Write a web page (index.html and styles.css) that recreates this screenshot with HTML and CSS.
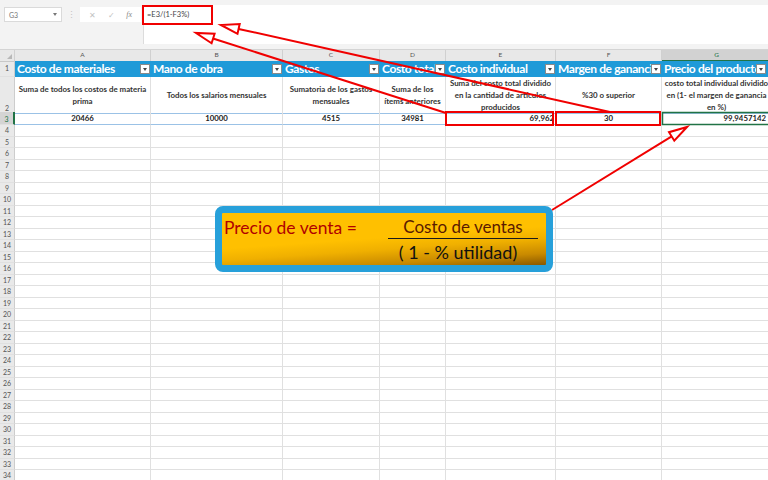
FILE: index.html
```html
<!DOCTYPE html>
<html lang="es">
<head>
    <meta charset="UTF-8">
    <meta name="viewport" content="width=device-width, initial-scale=1.0">
    <title>Precio de venta</title>
    <link rel="stylesheet" href="styles.css">
</head>
<body>
    <div class="formula-bar">
        <div class="namebox"><span>G3</span><span class="caret"></span></div>
        <div class="dots">⋮</div>
        <div class="fx-tools"><span>✕</span><span>✓</span><span class="fx">fx</span></div>
        <div class="formula">=E3/(1-F3%)</div>
    </div>

    <div class="sheet">
        <div class="row col-head">
            <div class="corner"></div>
            <div>A</div><div>B</div><div>C</div><div>D</div><div>E</div><div>F</div>
            <div class="active">G</div>
        </div>

        <div class="row row1">
            <div class="num">1</div>
            <div class="head">Costo de materiales<span class="filter"></span></div>
            <div class="head">Mano de obra<span class="filter"></span></div>
            <div class="head">Gastos<span class="filter"></span></div>
            <div class="head">Costo total<span class="filter"></span></div>
            <div class="head">Costo individual<span class="filter"></span></div>
            <div class="head">Margen de ganancia<span class="filter"></span></div>
            <div class="head">Precio del producto<span class="filter last"></span></div>
        </div>

        <div class="row row2">
            <div class="num">2</div>
            <div class="desc">Suma de todos los costos de materia prima</div>
            <div class="desc">Todos los salarios mensuales</div>
            <div class="desc">Sumatoria de los gastos mensuales</div>
            <div class="desc">Suma de los<br>ítems anteriores</div>
            <div class="desc">Suma del costo total dividido en la cantidad de artículos producidos</div>
            <div class="desc">%30 o superior</div>
            <div class="desc">costo total individual dividido en (1- el margen de ganancia en %)</div>
        </div>

        <div class="row row3">
            <div class="num">3</div>
            <div class="val">20466</div>
            <div class="val">10000</div>
            <div class="val">4515</div>
            <div class="val">34981</div>
            <div class="val right">69,962</div>
            <div class="val">30</div>
            <div class="val right last">99,9457142</div>
        </div>

        <div id="emptyRows"></div>
    </div>

    <div class="callout">
        <div class="label">Precio de venta =</div>
        <div class="fraction">
            <div class="top">Costo de ventas</div>
            <div class="bottom">( 1 - % utilidad)</div>
        </div>
    </div>

    <svg class="marks" width="768" height="480" viewBox="0 0 768 480">
        <rect x="143" y="6" width="69" height="18" class="red-box"/>
        <rect x="446" y="112" width="107" height="13" class="red-box"/>
        <rect x="556" y="112" width="104" height="13" class="red-box"/>
        <rect x="662.5" y="112.5" width="110" height="12" class="green-box"/>

        <!-- E3 to formula -->
        <line x1="446" y1="113" x2="213" y2="38.5" class="arrow"/>
        <polygon points="196,33 211.6,43.3 214.6,33.7" class="head-tri"/>
        <!-- F3 to formula -->
        <line x1="610" y1="112" x2="238.6" y2="28.9" class="arrow"/>
        <polygon points="221,25 237.5,33.8 239.7,24" class="head-tri"/>
        <!-- callout to G3 -->
        <line x1="552" y1="210" x2="671.7" y2="136.4" class="arrow"/>
        <polygon points="687,127 674.3,140.7 669,132.2" class="head-tri"/>
    </svg>

    <script>
        const emptyRows = document.getElementById("emptyRows");
        let rows = "";
        for (let i = 4; i <= 34; i++) {
            rows += `<div class="row empty"><div class="num">${i}</div>` + '<div></div>'.repeat(7) + '</div>';
        }
        emptyRows.innerHTML = rows;
    </script>
</body>
</html>
```

FILE: styles.css
```css
* {
    margin: 0;
    padding: 0;
    box-sizing: border-box;
}

body {
    font-family: Lato, 'Liberation Sans', sans-serif;
    background-color: white;
    width: 768px;
    height: 480px;
    overflow: hidden;
    position: relative;
}

/* formula bar */
.formula-bar {
    height: 50px;
    background-color: #f3f3f3;
    display: flex;
    align-items: flex-start;
    padding-top: 7px;
    border-bottom: 1px solid #d4d4d4;
}

.namebox {
    margin-left: 4px;
    width: 58px;
    height: 15px;
    background-color: white;
    border: 1px solid #dadada;
    font-size: 7px;
    color: #777;
    display: flex;
    align-items: center;
    justify-content: space-between;
    padding: 0 4px;
}

.caret {
    border-left: 2.5px solid transparent;
    border-right: 2.5px solid transparent;
    border-top: 3px solid #777;
}

.dots {
    width: 18px;
    text-align: center;
    font-size: 9px;
    color: #c4c4c4;
    line-height: 15px;
}

.fx-tools {
    width: 61px;
    height: 15px;
    background-color: white;
    display: flex;
    justify-content: space-around;
    align-items: center;
    font-size: 8px;
    color: #c2c2c2;
    padding: 0 3px;
}

.fx-tools .fx {
    font-style: italic;
    font-family: 'Liberation Serif', serif;
    color: #888;
}

.formula {
    margin-left: 2px;
    margin-top: -2px;
    flex: 1;
    height: 39px;
    background-color: white;
    border-left: 1px solid #dcdcdc;
    font-size: 7.5px;
    color: #444;
    padding: 5px 3px;
}

/* sheet grid */
.row {
    display: grid;
    grid-template-columns: 15px 136px 132px 97px 66px 110px 106px 110px;
    width: 772px;
}

.row > div {
    border-right: 1px solid #e0e0e0;
    border-bottom: 1px solid #e0e0e0;
}

.col-head {
    height: 11px;
    background-color: #e8e8e8;
}

.col-head > div {
    font-size: 6.5px;
    color: #555;
    text-align: center;
    line-height: 10px;
    border-right: 1px solid #d0d0d0;
    border-bottom: 1px solid #c8c8c8;
}

.col-head .active {
    background-color: #d2d2d2;
    color: #217346;
    border-bottom: 2px solid #217346;
}

.corner {
    position: relative;
}

.corner::after {
    content: "";
    position: absolute;
    right: 2px;
    bottom: 2px;
    border-left: 5px solid transparent;
    border-bottom: 5px solid #b8b8b8;
}

.num {
    background-color: #e9e9e9;
    color: #555;
    font-size: 7px;
    text-align: center;
    display: flex;
    align-items: flex-end;
    justify-content: center;
    padding-bottom: 1px;
    border-right: 1px solid #cdcdcd !important;
}

.row1 {
    height: 16px;
}

.row1 .num {
    align-items: center;
}

.head {
    background-color: #1f9ad8;
    color: white;
    font-weight: bold;
    font-size: 12px;
    letter-spacing: -0.4px;
    line-height: 15px;
    white-space: nowrap;
    overflow: hidden;
    padding-left: 2px;
    position: relative;
    border-right: none !important;
    border-bottom: none !important;
}

.filter {
    position: absolute;
    right: 1px;
    top: 3px;
    width: 10px;
    height: 10px;
    background-color: white;
    border: 1px solid #8a8a8a;
}

.filter.last {
    right: 6px;
}

.filter::after {
    content: "";
    position: absolute;
    left: 2px;
    top: 3px;
    border-left: 2.5px solid transparent;
    border-right: 2.5px solid transparent;
    border-top: 3px solid #444;
}

.row2 {
    height: 35px;
}

.desc {
    display: flex;
    align-items: center;
    justify-content: center;
    text-align: center;
    font-weight: bold;
    font-size: 7.9px;
    line-height: 12px;
    color: #333;
    padding: 0 1px;
    border-bottom: 1px solid #9bc2e6 !important;
}

.row3 {
    height: 13px;
}

.row3 .num {
    background-color: #d4d4d4;
    color: #217346;
    border-right: 2px solid #217346 !important;
}

.val {
    font-weight: bold;
    font-size: 7.8px;
    line-height: 12px;
    color: #222;
    text-align: center;
    white-space: nowrap;
    overflow: hidden;
    border-bottom: 1px solid #9bc2e6 !important;
}

.val.right {
    text-align: right;
    padding-right: 1px;
}

.val.last {
    padding-right: 5px;
}

.empty {
    height: 11.5px;
}

.empty .num {
    line-height: 10px;
    padding-bottom: 0;
    align-items: center;
}

/* formula callout */
.callout {
    position: absolute;
    left: 215px;
    top: 206px;
    width: 338px;
    height: 66px;
    border: 7px solid #27a0da;
    border-radius: 8px;
    background: linear-gradient(176deg, #ffc000 48%, #f0b000 64%, #c98a00 84%, #8a5800 100%);
    display: flex;
    align-items: flex-start;
    padding-left: 2px;
}

.callout .label {
    width: 164px;
    font-size: 17.5px;
    color: #b00000;
    line-height: 20px;
    margin-top: 5px;
}

.fraction {
    width: 150px;
}

.fraction .top {
    height: 26px;
    padding-top: 4px;
    text-align: center;
    font-size: 17px;
    line-height: 19px;
    color: #5a1a00;
    border-bottom: 1.5px solid #1a1a1a;
}

.fraction .bottom {
    text-align: center;
    font-size: 18px;
    line-height: 26px;
    color: #111;
    margin-left: -10px;
}

/* annotations */
.marks {
    position: absolute;
    left: 0;
    top: 0;
    pointer-events: none;
}

.red-box {
    fill: none;
    stroke: #f00000;
    stroke-width: 2;
}

.green-box {
    fill: none;
    stroke: #217346;
    stroke-width: 1.5;
}

.arrow {
    stroke: #f00000;
    stroke-width: 2;
}

.head-tri {
    fill: white;
    stroke: #f00000;
    stroke-width: 2;
    stroke-linejoin: miter;
}
```
